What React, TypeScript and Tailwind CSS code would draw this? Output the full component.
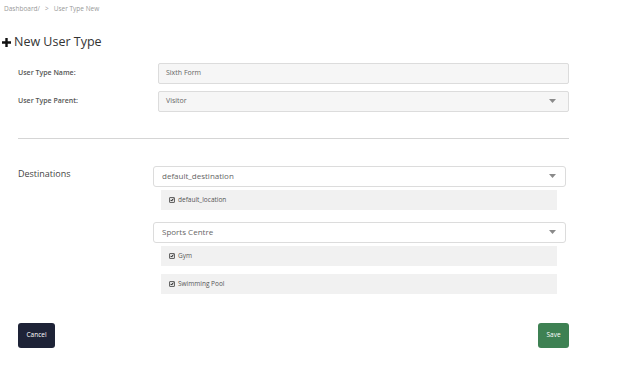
import React from 'react';

const Caret = () => (
  <svg width="7" height="4" viewBox="0 0 7 4" className="shrink-0">
    <path d="M0 0 L7 0 L3.5 4 Z" fill="#8a8a8a" />
  </svg>
);

const Check = () => (
  <span className="w-[6px] h-[6px] border border-[#666] bg-[#ddd] rounded-[1px] flex items-center justify-center">
    <svg width="6" height="6" viewBox="0 0 6 6">
      <path d="M1 3 L2.5 4.5 L5 1" stroke="#111" strokeWidth="1.4" fill="none" />
    </svg>
  </span>
);

const Location: React.FC<{ name: string }> = ({ name }) => (
  <div className="ml-[8px] mr-[9px] h-[20px] bg-[#f1f1f1] flex items-center gap-[3px] pl-[8px] text-[6.5px] text-[#555]">
    <Check />
    <span>{name}</span>
  </div>
);

export default function App() {
  return (
    <div className="w-[623px] h-[365px] bg-white overflow-hidden" style={{ fontFamily: '"Open Sans", sans-serif' }}>
      <div className="pl-[4px] pt-[4px] text-[6.5px] text-[#999] flex gap-[5px]">
        <span>Dashboard/</span>
        <span>&gt;</span>
        <span>User Type New</span>
      </div>

      <h1 className="mt-[19px] pl-[2px] flex items-center gap-[3px] text-[12.5px] text-[#333]">
        <svg width="9" height="9" viewBox="0 0 9 9">
          <path d="M3.3 0 H5.7 V3.3 H9 V5.7 H5.7 V9 H3.3 V5.7 H0 V3.3 H3.3 Z" fill="#111" />
        </svg>
        New User Type
      </h1>

      <div className="ml-[18px] w-[551px] mt-[11px]">
        <div className="flex items-center">
          <div className="w-[140px] text-[7px] font-semibold text-[#555]">User Type Name:</div>
          <div className="flex-1 h-[21px] bg-[#f6f6f6] border border-[#dcdcdc] rounded-[2px] flex items-center px-[7px] text-[7px] text-[#666]">
            Sixth Form
          </div>
        </div>
        <div className="flex items-center mt-[7px]">
          <div className="w-[140px] text-[7px] font-semibold text-[#555]">User Type Parent:</div>
          <div className="flex-1 h-[21px] bg-[#f6f6f6] border border-[#dcdcdc] rounded-[2px] flex items-center justify-between pl-[7px] pr-[12px] text-[7px] text-[#666]">
            <span>Visitor</span>
            <Caret />
          </div>
        </div>

        <div className="mt-[26px] border-t border-[#d5d5d5]" />

        <div className="flex mt-[27px]">
          <div className="w-[135px] pt-[1px] text-[9px] text-[#444]">Destinations</div>
          <div className="w-[413px]">
            <div className="h-[21px] bg-white border border-[#dcdcdc] rounded-[3px] flex items-center justify-between pl-[8px] pr-[9px] text-[8px] text-[#666]">
              <span>default_destination</span>
              <Caret />
            </div>
            <div className="mt-[3px]">
              <Location name="default_location" />
            </div>

            <div className="mt-[12px] h-[21px] bg-white border border-[#dcdcdc] rounded-[3px] flex items-center justify-between pl-[8px] pr-[9px] text-[8px] text-[#666]">
              <span>Sports Centre</span>
              <Caret />
            </div>
            <div className="mt-[3px] flex flex-col gap-[8px]">
              <Location name="Gym" />
              <Location name="Swimming Pool" />
            </div>
          </div>
        </div>

        <div className="flex justify-between mt-[29px]">
          <button className="w-[37px] h-[25px] bg-[#1e2337] text-white text-[6.5px] rounded-[3px]">Cancel</button>
          <button className="w-[31px] h-[25px] bg-[#3e8153] text-white text-[6.5px] rounded-[3px]">Save</button>
        </div>
      </div>
    </div>
  );
}
